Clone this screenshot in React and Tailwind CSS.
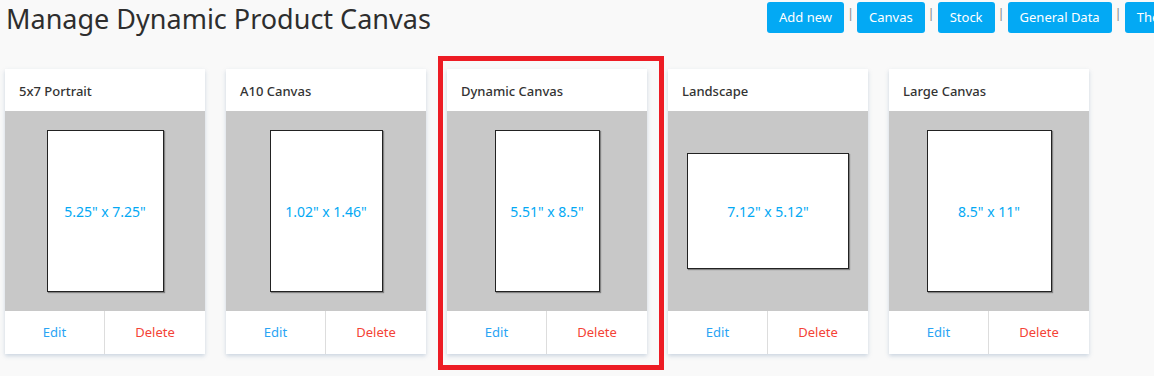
import React from "react";

const canvases = [
  { id: 1, name: "5x7 Portrait", w: 5.25, h: 7.25, label: '5.25" x 7.25"' },
  { id: 2, name: "A10 Canvas", w: 1.02, h: 1.46, label: '1.02" x 1.46"' },
  { id: 3, name: "Dynamic Canvas", w: 5.51, h: 8.5, label: '5.51" x 8.5"', selected: true },
  { id: 4, name: "Landscape", w: 7.12, h: 5.12, label: '7.12" x 5.12"' },
  { id: 5, name: "Large Canvas", w: 8.5, h: 11, label: '8.5" x 11"' },
];

const navButtons = ["Add new", "Canvas", "Stock", "General Data", "Theme"];

export default function App() {
  return (
    <div
      className="relative w-[1154px] h-[376px] overflow-hidden bg-[#f9f9f9]"
      style={{ fontFamily: '"Noto Sans", "Open Sans", sans-serif' }}
    >
      {/* Header */}
      <div className="flex items-start">
        <h1 className="w-[767px] shrink-0 pl-[6px] text-[27px] leading-[37px] text-[#2e2e2e]">
          Manage Dynamic Product Canvas
        </h1>
        <div className="flex items-start pt-[2px] shrink-0">
          {navButtons.map((b, i) => (
            <div key={b} className="flex items-start">
              {i > 0 && (
                <span className="w-[13px] text-center text-[13px] leading-[22px] text-[#888]">
                  |
                </span>
              )}
              <button className="h-[31px] w-auto px-[12px] rounded-[3px] bg-[#03a9f4] text-white text-[13px] leading-[31px]">
                {b}
              </button>
            </div>
          ))}
        </div>
      </div>

      {/* Cards */}
      <div className="flex gap-[21px] pl-[5px] pt-[32px]">
        {canvases.map((c) => (
          <CanvasCard key={c.id} canvas={c} />
        ))}
      </div>
    </div>
  );
}

function CanvasCard({ canvas }) {
  const max = 162;
  const scale = max / Math.max(canvas.w, canvas.h);
  const width = Math.round(canvas.w * scale);
  const height = Math.round(canvas.h * scale);

  return (
    <div className="relative">
      {canvas.selected && (
        <div className="absolute -left-[9px] -top-[13px] w-[226px] h-[314px] border-[5.5px] border-[#ed1c24] pointer-events-none" />
      )}
      <div className="w-[200px] bg-white shadow-[0_2px_4px_rgba(120,150,180,0.35)]">
        <div className="h-[42px] flex items-center px-[14px] pt-[3px] text-[13px] font-medium text-[#333]">
          {canvas.name}
        </div>
        <div className="h-[200px] bg-[#c8c8c8] flex items-center justify-center">
          <div
            className="bg-white border border-[#222] shadow-[1px_1px_1px_rgba(0,0,0,0.35)] flex items-center justify-center text-[14px] text-[#03a9f4]"
            style={{ width, height }}
          >
            {canvas.label}
          </div>
        </div>
        <div className="h-[43px] grid grid-cols-2 text-[13px]">
          <button className="text-[#2aa4f4] border-r border-[#ddd]">Edit</button>
          <button className="text-[#f44336]">Delete</button>
        </div>
      </div>
    </div>
  );
}
